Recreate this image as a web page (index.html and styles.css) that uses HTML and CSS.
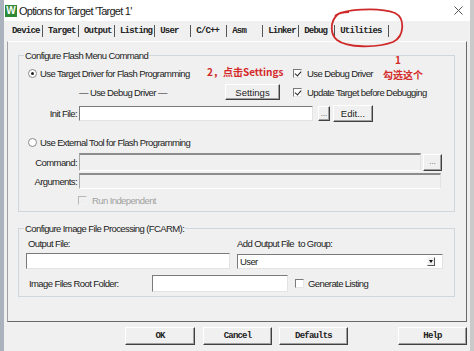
FILE: index.html
```html
<!DOCTYPE html>
<html lang="en">
    <head>
        <meta charset="UTF-8" />
        <meta name="viewport" content="width=device-width, initial-scale=1.0" />
        <title>Options for Target 'Target 1'</title>
        <link rel="stylesheet" href="styles.css">
    </head>
    <body>
        <div class="window">
            <div class="titlebar">
                <span class="app-icon">W</span>
                <span class="title">Options for Target 'Target 1'</span>
                <svg class="close" width="9" height="9" viewBox="0 0 9 9">
                    <path d="M0.5 0.5 L8.5 8.5 M8.5 0.5 L0.5 8.5" stroke="#555" stroke-width="1" fill="none" />
                </svg>
            </div>

            <div class="tabs">
                <span class="tab">Device</span>
                <span class="tab">Target</span>
                <span class="tab">Output</span>
                <span class="tab">Listing</span>
                <span class="tab">User</span>
                <span class="tab">C/C++</span>
                <span class="tab">Asm</span>
                <span class="tab">Linker</span>
                <span class="tab">Debug</span>
                <span class="tab tab-active">Utilities</span>
            </div>

            <div class="page">
                <!-- Flash menu -->
                <div class="group">
                    <div class="group-title">Configure Flash Menu Command</div>
                    <div class="row row-a">
                        <label class="opt opt-wide"><span class="radio radio-on"></span>Use Target Driver for Flash Programming</label>
                        <label class="opt"><span class="check check-on"></span>Use Debug Driver</label>
                    </div>
                    <div class="row row-b">
                        <span class="caption">&mdash; Use Debug Driver &mdash;</span>
                        <button class="btn btn-settings">Settings</button>
                        <label class="opt"><span class="check check-on"></span>Update Target before Debugging</label>
                    </div>
                    <div class="row row-c">
                        <span class="field-label">Init File:</span>
                        <span class="input input-init"></span>
                        <button class="btn btn-dots">...</button>
                        <button class="btn btn-edit">Edit...</button>
                    </div>
                    <div class="row row-d">
                        <label class="opt"><span class="radio"></span>Use External Tool for Flash Programming</label>
                    </div>
                    <div class="row row-e">
                        <span class="field-label">Command:</span>
                        <span class="input input-off input-cmd"></span>
                        <button class="btn btn-dots btn-dots-cmd">...</button>
                    </div>
                    <div class="row row-f">
                        <span class="field-label">Arguments:</span>
                        <span class="input input-off input-args"></span>
                    </div>
                    <div class="row row-g">
                        <label class="opt opt-off"><span class="check check-off"></span>Run Independent</label>
                    </div>
                </div>

                <!-- Image files -->
                <div class="group group-image">
                    <div class="group-title">Configure Image File Processing (FCARM):</div>
                    <div class="row row-h">
                        <span class="col-output">Output File:</span>
                        <span>Add Output File&nbsp; to Group:</span>
                    </div>
                    <div class="row row-i">
                        <span class="input input-output"></span>
                        <span class="input select">
                            <span class="select-value">User</span>
                            <span class="select-arrow"></span>
                        </span>
                    </div>
                    <div class="row row-j">
                        <span class="col-root">Image Files Root Folder:</span>
                        <span class="input input-root"></span>
                        <label class="opt"><span class="check check-listing"></span>Generate Listing</label>
                    </div>
                </div>
            </div>

            <div class="buttons">
                <button class="btn dlg-btn btn-ok">OK</button>
                <button class="btn dlg-btn btn-cancel">Cancel</button>
                <button class="btn dlg-btn btn-defaults">Defaults</button>
                <button class="btn dlg-btn btn-help">Help</button>
            </div>

            <!-- hand drawn notes on the screenshot -->
            <svg class="note-ring" width="76" height="40" viewBox="0 0 76 40">
                <path d="M6 8 C14 1 50 -1 66 5 C76 10 76 28 64 34 C48 40 18 40 8 32 C1 26 1 14 8 7 C10 5 14 4 20 4" stroke="#cf2a2a" stroke-width="1.8" fill="none" />
            </svg>
            <span class="note note-settings">2，点击Settings</span>
            <span class="note note-one">1</span>
            <span class="note note-check">勾选这个</span>
        </div>
    </body>
</html>
```

FILE: styles.css
```css
* {
    box-sizing: border-box;
}
body {
    margin: 0;
    background-color: #f0f0f0;
    font-family: "Liberation Sans", Arial, sans-serif;
    font-size: 9.5px;
    letter-spacing: -0.6px;
    color: #222;
}
.window {
    position: relative;
    width: 474px;
    height: 351px;
    overflow: hidden;
    background-color: #f0f0f0;
    border-left: 4px solid #aab3bd;
    border-right: 4px solid #cacaca;
}
.titlebar {
    height: 21px;
    background-color: #fff;
    display: flex;
    align-items: center;
    padding-left: 1px;
}
.app-icon {
    width: 12px;
    height: 12px;
    background-color: #2f8a35;
    color: #fff;
    font: bold 10px/12px "Liberation Sans", sans-serif;
    letter-spacing: 0;
    text-align: center;
    margin-right: 2px;
}
.title {
    font-size: 11px;
    letter-spacing: -0.75px;
    color: #1a1a1a;
}
.close {
    margin-left: auto;
    margin-right: 7px;
}
.tabs {
    height: 20px;
    display: flex;
    align-items: center;
    padding-left: 3px;
    font: bold 9px "Liberation Mono", monospace;
    letter-spacing: -0.8px;
    color: #222;
}
.tab {
    min-width: 36px;
    padding: 0 2px 0 5px;
    border-right: 1px solid #555;
    line-height: 12px;
}
.tab-active {
    padding-right: 6px;
}
.page {
    margin: 0 3px;
    height: 281px;
    border: 1px solid;
    border-color: #fff #696969 #696969 #a0a0a0;
    padding: 13px 11px 0 10px;
}
.group {
    border: 1px solid #d0d7dc;
    padding-bottom: 5px;
}
.group-image {
    margin-top: 16px;
    padding-bottom: 4px;
}
.group-title {
    width: fit-content;
    margin: -7px 0 0 5px;
    padding: 0 1px;
    line-height: 13px;
    background-color: #f0f0f0;
}
.row {
    display: flex;
    align-items: center;
}
.opt {
    display: flex;
    align-items: center;
}
.opt-wide {
    width: 265px;
}
.opt-off {
    color: #a0a0a0;
}
.radio {
    position: relative;
    width: 9px;
    height: 9px;
    border-radius: 50%;
    border: 1px solid #8a8a8a;
    background-color: #fff;
    margin-right: 3px;
}
.radio-on::after {
    content: "";
    position: absolute;
    left: 2px;
    top: 2px;
    width: 3px;
    height: 3px;
    border-radius: 50%;
    background-color: #222;
}
.check {
    position: relative;
    width: 9px;
    height: 9px;
    border: 1px solid;
    border-color: #7a7a7a #e6e6e6 #e6e6e6 #7a7a7a;
    background-color: #fff;
    margin-right: 5px;
}
.check-on::after {
    content: "";
    position: absolute;
    left: 2px;
    top: 0;
    width: 3px;
    height: 5px;
    border: solid #222;
    border-width: 0 1.5px 1.5px 0;
    transform: rotate(40deg);
}
.check-off {
    border-color: #b8b8b8 #f4f4f4 #f4f4f4 #b8b8b8;
    background-color: #f0f0f0;
}
.check-listing {
    margin-right: 4px;
}
.row-a {
    height: 14px;
    margin-top: 4px;
    padding-left: 9px;
}
.row-b {
    height: 16px;
    margin-top: 4px;
    padding-left: 60px;
}
.caption {
    width: 146px;
}
.row-c {
    height: 17px;
    margin-top: 5px;
}
.field-label {
    width: 58px;
    text-align: right;
    margin-right: 2px;
}
.row-d {
    height: 14px;
    margin-top: 13px;
    padding-left: 9px;
}
.row-e {
    height: 18px;
    margin-top: 4px;
}
.row-f {
    height: 16px;
    margin-top: 2px;
}
.row-g {
    height: 12px;
    margin-top: 5px;
    padding-left: 59px;
}
.row-h {
    height: 12px;
    margin-top: 2px;
    padding-left: 9px;
}
.col-output {
    width: 209px;
}
.row-i {
    height: 16px;
    margin-top: 4px;
    padding-left: 7px;
}
.row-j {
    height: 17px;
    margin-top: 6px;
    padding-left: 10px;
}
.col-root {
    width: 123px;
}
.input {
    display: block;
    height: 15px;
    background-color: #fff;
    border: 1px solid;
    border-color: #7a7a7a #e3e3e3 #e3e3e3 #7a7a7a;
}
.input-off {
    background-color: #f0f0f0;
    border-top: 2px solid #8c8c8c;
    border-left-color: #a8a8a8;
    border-bottom-color: #fff;
}
.input-init {
    width: 234px;
}
.input-cmd {
    width: 342px;
    height: 18px;
}
.input-args {
    width: 362px;
    height: 16px;
}
.input-output {
    width: 204px;
    height: 16px;
    margin-right: 7px;
}
.input-root {
    width: 136px;
    height: 17px;
    margin-right: 7px;
}
.select {
    width: 206px;
    display: flex;
    align-items: center;
}
.select-value {
    padding-left: 2px;
}
.select-arrow {
    position: relative;
    width: 8px;
    height: 9px;
    margin-left: auto;
    margin-right: 7px;
    border: 1px solid;
    border-color: #f8f8f8 #555 #555 #f8f8f8;
    background-color: #f0f0f0;
}
.select-arrow::after {
    content: "";
    position: absolute;
    left: 1px;
    top: 2px;
    border: 2px solid transparent;
    border-top: 3px solid #111;
}
.btn {
    display: block;
    padding: 0;
    height: 16px;
    background-color: #f0f0f0;
    border: 1px solid;
    border-color: #fff #404040 #404040 #fff;
    box-shadow: inset -1px -1px #a0a0a0;
    font: inherit;
    color: #222;
    text-align: center;
}
.btn-settings {
    width: 55px;
    margin-right: 13px;
}
.btn-dots {
    width: 12px;
    height: 15px;
    margin-left: 5px;
    font-size: 8px;
    line-height: 8px;
    color: #555;
}
.btn-dots-cmd {
    width: 19px;
    height: 17px;
    margin-left: 2px;
}
.btn-edit {
    width: 40px;
    height: 17px;
    margin-left: 3px;
}
.buttons {
    display: flex;
    height: 18px;
    margin-top: 5px;
    padding-left: 121px;
}
.dlg-btn {
    width: 69px;
    height: 18px;
    font: bold 9px "Liberation Mono", monospace;
    letter-spacing: -0.8px;
}
.btn-ok {
    width: 70px;
}
.btn-cancel {
    margin-left: 8px;
}
.btn-defaults {
    margin-left: 7px;
}
.btn-help {
    margin-left: 50px;
}
.note {
    position: absolute;
    color: #d42a2a;
    font-family: "Noto Sans CJK SC", sans-serif;
    font-weight: bold;
    letter-spacing: 0;
}
.note-settings {
    left: 203px;
    top: 65px;
    font-size: 10px;
    line-height: 14px;
}
.note-one {
    left: 391px;
    top: 54px;
    font-size: 10px;
    line-height: 12px;
}
.note-check {
    left: 379px;
    top: 68px;
    font-size: 10px;
    line-height: 13px;
}
.note-ring {
    position: absolute;
    left: 325px;
    top: 8px;
}
```
